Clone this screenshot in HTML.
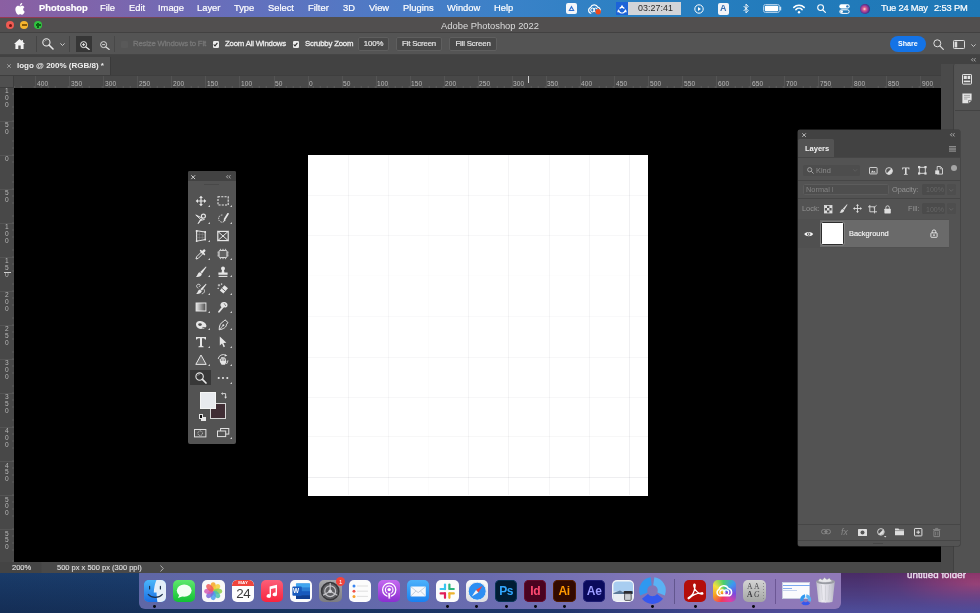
<!DOCTYPE html>
<html lang="en">
<head>
<meta charset="utf-8">
<title>Adobe Photoshop 2022</title>
<style>
*{box-sizing:border-box;margin:0;padding:0}
html,body{width:980px;height:613px;overflow:hidden;background:#1b3a6b}
body{font-family:"Liberation Sans",sans-serif;color:#ddd;position:relative;-webkit-font-smoothing:antialiased}
.abs{position:absolute}
.t{position:absolute;white-space:nowrap;line-height:1;will-change:transform}
svg{position:absolute;overflow:visible}

/* desktop */
#desk{left:0;top:560px;width:980px;height:53px;background:linear-gradient(180deg,rgba(40,90,150,.28) 0%,rgba(30,70,130,.12) 45%,rgba(10,20,50,.22) 100%),linear-gradient(90deg,#17355f 0%,#193a68 30%,#233e78 55%,#3a3f88 75%,#4a3f88 86%,#5a4088 100%)}
#desk2{left:700px;top:560px;width:280px;height:53px;background:radial-gradient(ellipse 120px 40px at 99% 46%,rgba(176,62,108,.95) 0%,rgba(150,54,108,.75) 35%,rgba(110,50,110,.4) 68%,rgba(80,50,110,0) 100%),linear-gradient(90deg,rgba(74,44,102,0) 0%,rgba(74,44,102,1) 55%),linear-gradient(180deg,rgba(74,44,102,1) 0%,rgba(74,44,102,1) 100%)}

/* menubar */
#menubar{left:0;top:0;width:980px;height:17px;background:linear-gradient(90deg,#8b5fa2 0%,#7b66ae 12%,#6470bd 25%,#4c7bc6 40%,#3a82c8 52%,#2b80c2 65%,#227bbb 80%,#1f78b6 100%)}
#menubar .t{top:3.9px;font-size:9.35px;color:#fff;-webkit-text-stroke:.2px #fff}
#menubar .b{font-weight:bold}

/* window */
#titlebar{left:0;top:17px;width:980px;height:16px;background:#514f4f;border-bottom:1px solid #424141}
#optbar{left:0;top:33px;width:980px;height:22px;background:#545454;border-bottom:1px solid #454545}
#tabbar{left:0;top:55px;width:941px;height:20px;background:#424242}
#tab{left:0;top:57px;width:111px;height:18px;background:#535353;border-right:1px solid #3a3a3a}
#hruler{left:0;top:75px;width:941px;height:13.4px;background:#484848;border-top:1px solid #3e3e3e}
#vruler{left:0;top:88px;width:14px;height:474px;background:#484848}
#work{left:14px;top:88.4px;width:927px;height:473.6px;background:#000}
#status{left:0;top:562px;width:941px;height:11px;background:linear-gradient(90deg,#444 0,#444 41px,#494949 42px,#494949 100%)}
#rightgap{left:941px;top:55px;width:39px;height:518px;background:linear-gradient(180deg,#424242 0,#424242 9px,#4a4a4a 9.5px,#4a4a4a 100%)}
#rightcol{left:953.4px;top:64px;width:26.6px;height:509px;background:#525252;border-left:1px solid #404040;border-radius:2px 0 0 0}
#canvas{left:307.6px;top:155.2px;width:340.2px;height:340.5px;background:#fff}

.ot{top:40.4px;font-size:7.8px;letter-spacing:-.2px;color:#ececec;-webkit-text-stroke:.3px currentColor}
.cb{top:40.8px;width:6.8px;height:6.8px;border-radius:1.3px;background:#ececec}
.btn{will-change:transform;top:37px;height:14px;background:#494949;border:1px solid #5f5f5f;border-radius:2px;font-size:7.8px;letter-spacing:-.15px;line-height:12.6px;text-align:center;color:#e4e4e4;-webkit-text-stroke:.2px currentColor}

.htk{top:76px;width:1px;height:12px;background:#545454}
.vtk{left:0;width:14px;height:1px;background:#545454}
.rl{font-size:6.6px;color:#b8b8b8;letter-spacing:.1px}
.vd{left:3px;width:8px;text-align:center}
.st{top:564.2px;font-size:7.5px;color:#dedede;-webkit-text-stroke:.15px currentColor}

.di{top:579.6px;width:22.4px;height:22.4px;border-radius:5px;overflow:hidden}
#desk3{left:560px;top:573px;width:420px;height:40px;background:linear-gradient(180deg,rgba(80,84,162,0) 0%,rgba(80,84,162,.45) 55%,rgba(78,84,165,.85) 100%);-webkit-mask-image:linear-gradient(90deg,transparent 0,#000 55%);mask-image:linear-gradient(90deg,transparent 0,#000 55%)}
</style>
</head>
<body>
<div class="abs" id="desk"></div>
<div class="abs" id="desk2"></div>
<div class="abs" id="desk3"></div>
<span class="t" style="left:907px;top:569.6px;font-size:9.7px;color:#eadfee;letter-spacing:.05px;-webkit-text-stroke:.35px #eadfee">untitled folder</span>
<!-- dock -->
<div class="abs" style="left:138.8px;top:566px;width:702.7px;height:43.4px;border-radius:6px;background:linear-gradient(90deg,#5f67a6 0%,#6269aa 30%,#6a6cb0 50%,#7c74b6 68%,#8c79b8 82%,#9079b8 100%)"></div>
<div class="abs di" style="left:143.8px;background:#2f9af2"><svg style="left:0;top:0" width="22.4" height="22.4" viewBox="0 0 22.4 22.4"><defs><linearGradient id="fg" x1="0" y1="0" x2="0" y2="1"><stop offset="0" stop-color="#4ab6fa"/><stop offset="1" stop-color="#1a6fe4"/></linearGradient></defs><path d="M0 0 H12.4 C10.8 4 10 8 9.8 12.4 H12.6 C12.6 16 13 19.6 13.6 22.4 H0 Z" fill="url(#fg)"/><path d="M12.4 0 H22.4 V22.4 H13.6 C13 19.6 12.6 16 12.6 12.4 H9.8 C10 8 10.8 4 12.400000000000002 0 Z" fill="#e4eef8"/><path d="M5.6 6.4 V9 M16.4 6.4 V9" stroke="#1c2f4a" stroke-width="1.2" stroke-linecap="round"/><path d="M4.2 14.4 C8 18.4 14.6 18.4 18.4 14.4" fill="none" stroke="#1c2f4a" stroke-width="1.1" stroke-linecap="round"/></svg></div>
<div class="abs di" style="left:173.1px;background:linear-gradient(180deg,#5ee86c,#12c135)"><svg style="left:0;top:0" width="22.4" height="22.4" viewBox="0 0 22.4 22.4"><ellipse cx="11.2" cy="10.6" rx="7.4" ry="6.2" fill="#f4fff4"/><path d="M6.4 14.4 L5 18 L9.6 16.2 Z" fill="#f4fff4"/></svg></div>
<div class="abs di" style="left:202.3px;background:#f8f8f8"><svg style="left:0;top:0" width="22.4" height="22.4" viewBox="0 0 22.4 22.4"><ellipse cx="11.20" cy="6.60" rx="4.4" ry="2.7" fill="#f6a623" fill-opacity=".85" transform="rotate(-90 11.20 6.60)"/><ellipse cx="14.45" cy="7.95" rx="4.4" ry="2.7" fill="#f4d03a" fill-opacity=".85" transform="rotate(-45 14.45 7.95)"/><ellipse cx="15.80" cy="11.20" rx="4.4" ry="2.7" fill="#8ed04a" fill-opacity=".85" transform="rotate(0 15.80 11.20)"/><ellipse cx="14.45" cy="14.45" rx="4.4" ry="2.7" fill="#4cc3a8" fill-opacity=".85" transform="rotate(45 14.45 14.45)"/><ellipse cx="11.20" cy="15.80" rx="4.4" ry="2.7" fill="#4a9df0" fill-opacity=".85" transform="rotate(90 11.20 15.80)"/><ellipse cx="7.95" cy="14.45" rx="4.4" ry="2.7" fill="#7d6ad8" fill-opacity=".85" transform="rotate(135 7.95 14.45)"/><ellipse cx="6.60" cy="11.20" rx="4.4" ry="2.7" fill="#d25ab4" fill-opacity=".85" transform="rotate(180 6.60 11.20)"/><ellipse cx="7.95" cy="7.95" rx="4.4" ry="2.7" fill="#f0595a" fill-opacity=".85" transform="rotate(225 7.95 7.95)"/></svg></div>
<div class="abs di" style="left:231.6px;background:#fdfdfd"><div class="abs" style="left:0;top:0;width:22.4px;height:6.4px;background:#f0443c;border-radius:5px 5px 0 0"></div><span class="t" style="left:0;width:22.4px;text-align:center;top:1.2px;font-size:4.4px;font-weight:bold;color:#fff;letter-spacing:.1px">MAY</span><span class="t" style="left:0;width:22.4px;text-align:center;top:7px;font-size:13.4px;color:#3a3a3a;letter-spacing:-.4px">24</span></div>
<div class="abs di" style="left:260.8px;background:linear-gradient(180deg,#fc5f78,#f8243e)"><svg style="left:0;top:0" width="22.4" height="22.4" viewBox="0 0 22.4 22.4"><path d="M8.6 6.4 L16 4.8 V14.4 A2.2 1.9 0 1 1 14.6 12.6 V8 L10 9 V16 A2.2 1.9 0 1 1 8.6 14.2 Z" fill="#fff"/></svg></div>
<div class="abs di" style="left:290.1px;background:#fbfbfb"><svg style="left:0;top:0" width="22.4" height="22.4" viewBox="0 0 22.4 22.4"><rect x="6" y="3.4" width="14" height="15.6" rx="1.2" fill="#2b7cd3"/><rect x="6" y="3.400000000000001" width="14" height="4" fill="#41a5ee"/><rect x="6" y="11.2" width="14" height="4" fill="#185abd"/><rect x="6" y="15.2" width="14" height="3.8" fill="#103f91"/><rect x="2.400000000000001" y="6.4" width="9.4" height="9.4" rx="1" fill="#185abd"/></svg><span class="t" style="left:3.2px;top:8px;font-size:6.4px;font-weight:bold;color:#fff">W</span></div>
<div class="abs di" style="left:319.3px;background:linear-gradient(180deg,#a8a8ac,#7c7c80)"><svg style="left:0;top:0" width="22.4" height="22.4" viewBox="0 0 22.4 22.4"><circle cx="11.2" cy="11.2" r="8.6" fill="#5e5e62" stroke="#38383c" stroke-width="1.6"/><circle cx="11.2" cy="11.2" r="5.4" fill="none" stroke="#c4c4c8" stroke-width="1.2"/><path d="M11.2 11.2 L11.2 3 M11.2 11.2 L18.4 15.3 M11.2 11.2 L4 15.3" stroke="#c4c4c8" stroke-width="1.2"/><circle cx="11.2" cy="11.2" r="1.8" fill="#d8d8dc"/></svg></div>
<div class="abs" style="left:335.9px;top:577.3px;width:9px;height:9px;border-radius:50%;background:#f2453d"></div><span class="t" style="left:338.8px;top:578.8px;font-size:6px;color:#fff">1</span>
<div class="abs di" style="left:348.6px;background:#fcfcfc"><svg style="left:0;top:0" width="22.4" height="22.4" viewBox="0 0 22.4 22.4"><circle cx="5" cy="6" r="1.5" fill="#3a86f0"/><circle cx="5" cy="11.2" r="1.5" fill="#f0524a"/><circle cx="5" cy="16.4" r="1.5" fill="#f6a12c"/><path d="M8 6 H19 M8 11.2 H19 M8 16.4 H19" stroke="#d8d8d8" stroke-width=".8"/></svg></div>
<div class="abs di" style="left:377.8px;background:linear-gradient(180deg,#c56af0,#8a2fd0)"><svg style="left:0;top:0" width="22.4" height="22.4" viewBox="0 0 22.4 22.4"><circle cx="11.2" cy="9.8" r="6.6" fill="none" stroke="#fff" stroke-width="1.3"/><circle cx="11.2" cy="9.8" r="3.8" fill="none" stroke="#fff" stroke-width="1.2"/><circle cx="11.2" cy="9.6" r="1.7" fill="#fff"/><path d="M9.6 12.6 H12.8 L12.2 19 H10.2 Z" fill="#fff" stroke="#a43cd8" stroke-width=".8"/></svg></div>
<div class="abs di" style="left:407.1px;background:linear-gradient(180deg,#4db2fb,#1a80f0)"><svg style="left:0;top:0" width="22.4" height="22.4" viewBox="0 0 22.4 22.4"><rect x="3.6" y="6.4" width="15.2" height="10" rx="1.2" fill="#f6f8fc"/><path d="M3.8 6.8 L11.2 12.6 L18.6 6.8 M3.8 16 L9 11 M18.6 16 L13.4 11" fill="none" stroke="#b8c4d4" stroke-width=".8"/></svg></div>
<div class="abs di" style="left:436.3px;background:#fcfcfc"><svg style="left:0;top:0" width="22.4" height="22.4" viewBox="0 0 22.4 22.4"><g stroke-width="2.2" stroke-linecap="round" fill="none"><path d="M9 4.600000000000001 V9.2" stroke="#36c5f0"/><path d="M4.6 9 H9" stroke="#36c5f0"/><path d="M17.8 9 H13.6" stroke="#2eb67d"/><path d="M13.4 4.6 V9" stroke="#2eb67d"/><path d="M13.4 17.8 V13.4" stroke="#ecb22e"/><path d="M17.8 13.4 H13.4" stroke="#ecb22e"/><path d="M4.600000000000001 13.4 H9" stroke="#e01e5a"/><path d="M9 17.8 V13.4" stroke="#e01e5a"/></g></svg></div>
<div class="abs di" style="left:465.6px;background:linear-gradient(180deg,#fbfbfb,#dcdce0)"><svg style="left:0;top:0" width="22.4" height="22.4" viewBox="0 0 22.4 22.4"><circle cx="11.2" cy="11.2" r="9" fill="#2d8ef2"/><circle cx="11.2" cy="11.2" r="9" fill="none" stroke="#e6eaf0" stroke-width="1"/><path d="M16.6 5.8 L12.4 12.4 L10 10 Z" fill="#f2423c"/><path d="M5.800000000000001 16.6 L12.4 12.4 L10 10 Z" fill="#f4f4f4"/></svg></div>
<div class="abs di" style="left:494.8px;background:#001d34;box-shadow:inset 0 0 0 .8px #0a3a60"><span class="t" style="left:0;width:22.4px;text-align:center;top:5.4px;font-size:12px;font-weight:bold;color:#31a8ff;letter-spacing:-.3px">Ps</span></div>
<div class="abs di" style="left:524.0px;background:#4a0320;box-shadow:inset 0 0 0 .8px #6a1030"><span class="t" style="left:0;width:22.4px;text-align:center;top:5.4px;font-size:12px;font-weight:bold;color:#ff4a72;letter-spacing:-.3px">Id</span></div>
<div class="abs di" style="left:553.3px;background:#320a00;box-shadow:inset 0 0 0 .8px #5a2000"><span class="t" style="left:0;width:22.4px;text-align:center;top:5.4px;font-size:12px;font-weight:bold;color:#ff9a00;letter-spacing:-.3px">Ai</span></div>
<div class="abs di" style="left:582.5px;background:#0a0a5c;box-shadow:inset 0 0 0 .8px #22227a"><span class="t" style="left:0;width:22.4px;text-align:center;top:5.4px;font-size:12px;font-weight:bold;color:#9b9bff;letter-spacing:-.3px">Ae</span></div>
<div class="abs di" style="left:611.8px;background:#f4f6f8"><svg style="left:0;top:0" width="22.4" height="22.4" viewBox="0 0 22.4 22.4"><rect x="1.4" y="1.4" width="19.6" height="19.6" rx="3.6" fill="#a8cdf0"/><rect x="1.4" y="11.6" width="19.6" height="9.4" fill="#e8eef4"/><path d="M1.4 13 L8 10.6 L14 13.4 L21 11 V14 H1.4 Z" fill="#5a7a9a"/><rect x="11.6" y="11" width="8.6" height="3" rx="1" fill="#2a2a2e"/><rect x="12.6" y="13.6" width="6.6" height="6.8" rx="1" fill="#c8ccd0" stroke="#3a3a3e" stroke-width=".8"/></svg></div>
<svg style="left:639px;top:577.4px" width="27" height="27" viewBox="0 0 27 27"><path d="M14.79 4.29 A9.3 9.3 0 0 1 22.12 16.98" fill="none" stroke="#5ab2f4" stroke-width="8"/><path d="M4.88 16.98 A9.3 9.3 0 0 1 12.21 4.29" fill="none" stroke="#2f98f0" stroke-width="8"/><path d="M21.06 19.41 A9.6 9.6 0 0 1 5.94 19.41" fill="none" stroke="#3558ee" stroke-width="7.6"/></svg>
<div class="abs" style="left:674px;top:578.5px;width:1px;height:25.5px;background:rgba(70,60,110,.55)"></div>
<div class="abs di" style="left:684.0px;background:#b40e0a"><svg style="left:0;top:0" width="22.4" height="22.4" viewBox="0 0 22.4 22.4"><path d="M4.6 17.6 C8 16.4 10.600000000000001 11.4 11.200000000000001 5.4 C11.4 3.6 9.4 3.8 9.8 5.800000000000001 C10.6 10 14 13.6 17.6 14.200000000000001 C19.4 14.4 19.2 12.6 17.4 12.8 C12.8 13.2 8 15 5.6 18.2 C4.6 19.4 3.4 18.2 4.6 17.6 Z" fill="none" stroke="#fff" stroke-width="1.3" stroke-linejoin="round"/></svg></div>
<div class="abs di" style="left:713.2px;background:conic-gradient(from 200deg at 50% 55%,#f23a5a,#f8a020,#f4e040,#4ad06a,#3a9af0,#7a4ae0,#e040a0,#f23a5a)"><svg style="left:0;top:0" width="22.4" height="22.4" viewBox="0 0 22.4 22.4"><path d="M6.8 15.8 A3.4 3.4 0 0 1 6 9.4 A5 5 0 0 1 15.4 8.6 A3.8 3.8 0 0 1 16.4 15.8 Z" fill="none" stroke="#fff" stroke-width="1.5"/><circle cx="9.4" cy="12.4" r="2.5" fill="none" stroke="#fff" stroke-width="1.2"/><circle cx="13.2" cy="12.4" r="2.5" fill="none" stroke="#fff" stroke-width="1.2"/></svg></div>
<div class="abs di" style="left:743.2px;background:linear-gradient(180deg,#d4d4d4,#a4a6a4)"><span class="t" style="left:3.6px;top:3.6px;font-size:7.6px;color:#4a4a4e;font-family:'Liberation Serif',serif;letter-spacing:1.4px">AA</span><span class="t" style="left:3.6px;top:11.4px;font-size:7.6px;color:#3a3a3e;font-family:'Liberation Serif',serif;letter-spacing:1.4px"><b>A</b><i>G</i></span><div class="abs" style="left:19.6px;top:3px;width:1.2px;height:16.4px;background:repeating-linear-gradient(180deg,#8a8a8e 0 1.4px,transparent 1.4px 3px)"></div></div>
<div class="abs" style="left:774.6px;top:578.5px;width:1px;height:25.5px;background:rgba(80,60,120,.55)"></div>
<div class="abs" style="left:782px;top:582px;width:28px;height:17.4px;background:#fafbfd;border:.5px solid #c8cce0"></div>
<div class="abs" style="left:782.5px;top:584.6px;width:27px;height:1.6px;background:#7aa8f0"></div>
<div class="abs" style="left:783.2px;top:587.6px;width:9px;height:1.2px;background:#8ab0ee"></div>
<div class="abs" style="left:783.2px;top:590.2px;width:14px;height:.8px;background:#c4d2ee"></div>
<svg style="left:799.6px;top:593.6px" width="11.4" height="11.4" viewBox="0 0 27 27"><path d="M14.79 4.29 A9.3 9.3 0 0 1 22.12 16.98" fill="none" stroke="#5ab2f4" stroke-width="8"/><path d="M4.88 16.98 A9.3 9.3 0 0 1 12.21 4.29" fill="none" stroke="#2f98f0" stroke-width="8"/><path d="M21.06 19.41 A9.6 9.6 0 0 1 5.94 19.41" fill="none" stroke="#3558ee" stroke-width="7.6"/></svg>
<svg style="left:814.5px;top:577px" width="21" height="26.4" viewBox="0 0 21 26.4"><defs><linearGradient id="tg" x1="0" x2="1"><stop offset="0" stop-color="#c4c6cc"/><stop offset=".35" stop-color="#f4f4f6"/><stop offset=".7" stop-color="#dcdde2"/><stop offset="1" stop-color="#b8bac2"/></linearGradient></defs><path d="M1.2 4.6 H19.8 L17.6 24.6 C17.4 26 3.6 26 3.4 24.6 Z" fill="url(#tg)" fill-opacity=".92"/><ellipse cx="10.5" cy="4.6" rx="9.4" ry="2.6" fill="#9a9ca4"/><path d="M3 4 L5 1.4 L7.4 3 L9.4 .6 L12 2.6 L14.4 1 L16 3.2 L18 3.8 C16 6 5 6 3 4 Z" fill="#e8e8ec" stroke="#8a8c94" stroke-width=".4"/><path d="M6.4 8 L7.4 23 M10.5 8.4 V23.4 M14.6 8 L13.6 23" stroke="#c0c2c8" stroke-width=".5"/></svg>
<div class="abs" style="left:153.1px;top:605.3px;width:2.9px;height:2.9px;border-radius:50%;background:#08080e"></div>
<div class="abs" style="left:446.1px;top:605.3px;width:2.9px;height:2.9px;border-radius:50%;background:#08080e"></div>
<div class="abs" style="left:475.3px;top:605.3px;width:2.9px;height:2.9px;border-radius:50%;background:#08080e"></div>
<div class="abs" style="left:504.7px;top:605.3px;width:2.9px;height:2.9px;border-radius:50%;background:#08080e"></div>
<div class="abs" style="left:533.9px;top:605.3px;width:2.9px;height:2.9px;border-radius:50%;background:#08080e"></div>
<div class="abs" style="left:563.1px;top:605.3px;width:2.9px;height:2.9px;border-radius:50%;background:#08080e"></div>
<div class="abs" style="left:651.1px;top:605.3px;width:2.9px;height:2.9px;border-radius:50%;background:#08080e"></div>
<div class="abs" style="left:693.9px;top:605.3px;width:2.9px;height:2.9px;border-radius:50%;background:#08080e"></div>
<div class="abs" style="left:751.7px;top:605.3px;width:2.9px;height:2.9px;border-radius:50%;background:#08080e"></div>
<!--DOCK_END-->

<!-- ===== macOS menu bar ===== -->
<div class="abs" id="menubar">
  <span class="t b" style="left:39px">Photoshop</span>
  <span class="t" style="left:100px">File</span>
  <span class="t" style="left:129px">Edit</span>
  <span class="t" style="left:158px">Image</span>
  <span class="t" style="left:197px">Layer</span>
  <span class="t" style="left:234px">Type</span>
  <span class="t" style="left:268px">Select</span>
  <span class="t" style="left:308px">Filter</span>
  <span class="t" style="left:343px">3D</span>
  <span class="t" style="left:369px">View</span>
  <span class="t" style="left:403px">Plugins</span>
  <span class="t" style="left:447px">Window</span>
  <span class="t" style="left:494px">Help</span>
  <span class="t" style="left:880.5px;letter-spacing:-.22px">Tue 24 May</span>
  <span class="t" style="left:933.5px;letter-spacing:-.15px">2:53 PM</span>
</div>

<!-- ===== Photoshop window chrome ===== -->
<div class="abs" id="titlebar"></div>
<div class="abs" id="optbar"></div>
<div class="abs" id="tabbar"></div>
<div class="abs" id="tab"></div>
<div class="abs" id="hruler"></div>
<div class="abs" id="vruler"></div>
<div class="abs" id="work"></div>
<div class="abs" id="status"></div>
<div class="abs" id="rightgap"></div>
<div class="abs" id="rightcol"></div>
<div class="abs" id="canvas"></div>

<!-- menubar icons -->
<svg style="left:14.5px;top:2.5px" width="10" height="12" viewBox="0 0 10 12"><path d="M6.9 1.9 C7.4 1.3 7.7 .6 7.6 0 C6.9 0 6.1 .5 5.7 1 C5.3 1.5 4.9 2.2 5 2.9 C5.8 2.9 6.5 2.5 6.9 1.9 Z M7.7 3 C6.7 2.9 5.9 3.6 5.4 3.6 C4.9 3.6 4.2 3 3.4 3 C2.4 3 1.4 3.6 .9 4.6 C-.2 6.5 .6 9.3 1.6 10.800000000000001 C2.1 11.5 2.7 12.3 3.5 12.3 C4.3 12.3 4.6 11.8 5.5 11.8 C6.4 11.8 6.7 12.3 7.5 12.3 C8.3 12.3 8.9 11.5 9.4 10.8 C9.9 10 10.2 9.2 10.2 9.1 C10.2 9.1 8.6 8.5 8.6 6.7 C8.6 5.2 9.8 4.5 9.9 4.4 C9.200000000000001 3.4 8.1 3 7.7 3 Z" fill="#fff" transform="scale(.95)"/></svg>
<!-- app icon 1 -->
<div class="abs" style="left:566px;top:3px;width:11px;height:11px;border-radius:2px;background:#f4f6fa"></div>
<svg style="left:568px;top:5px" width="7" height="7" viewBox="0 0 7 7"><path d="M3.5 .6 L6.6 6 L.4 6 Z" fill="#2f6fd0"/><path d="M3.5 3 L4.8 5.1 L2.2 5.1 Z" fill="#f4f6fa"/></svg>
<!-- creative cloud w/ red dot -->
<svg style="left:587.5px;top:3.5px" width="14" height="11" viewBox="0 0 14 11"><path d="M3.3 9.3 A3 3 0 0 1 2.6 3.5 A3.9 3.9 0 0 1 9.8 3.2 A3.1 3.1 0 0 1 11.2 8.6" fill="none" stroke="#fff" stroke-width="1.2"/><circle cx="4.6" cy="6" r="1.9" fill="none" stroke="#fff" stroke-width="1"/><circle cx="7.6" cy="6" r="1.9" fill="none" stroke="#fff" stroke-width="1"/><circle cx="10.2" cy="7.8" r="2.7" fill="#ee4b1e"/></svg>
<!-- timer -->
<div class="abs" style="left:615.5px;top:2px;width:12.5px;height:13px;background:#1c63d8"></div>
<svg style="left:617px;top:3.5px" width="10" height="10" viewBox="0 0 10 10"><path d="M5 .7 L6.9 3.9 L3.1 3.9 Z M1.2 5 L3 8.3 L.2 8.3 Z M8.8 5 L9.8 8.3 L7 8.3 Z" fill="#fff"/><path d="M2.6 4.5 A3.4 3.4 0 0 1 7.4 4.5 M8 6.6 A3.4 3.4 0 0 1 5.2 9.2 M4.8 9.2 A3.4 3.4 0 0 1 2 6.6" fill="none" stroke="#fff" stroke-width="1.2"/></svg>
<div class="abs" style="left:628px;top:2px;width:53px;height:13px;background:#d2d4d8"></div>
<span class="t" style="left:638px;top:4.2px;font-size:8.9px;color:#2a2a2a;letter-spacing:.05px;-webkit-text-stroke:0">03:27:41</span>
<!-- play -->
<svg style="left:694px;top:3.5px" width="10" height="10" viewBox="0 0 10 10"><circle cx="5" cy="5" r="4.2" fill="none" stroke="#fff" stroke-width="1"/><path d="M4 3 L7 5 L4 7 Z" fill="#fff"/></svg>
<!-- A input -->
<div class="abs" style="left:717.5px;top:3px;width:11.5px;height:11.5px;border-radius:2px;background:#f2f4f8"></div>
<span class="t" style="left:720px;top:4px;font-size:9px;color:#3a6fb0;font-weight:bold;-webkit-text-stroke:0">A</span>
<!-- bluetooth -->
<svg style="left:743px;top:3px" width="6" height="11" viewBox="0 0 6 11"><path d="M.6 3 L5.2 7.6 L3 9.9 L3 1.1 L5.2 3.4 L.6 8" fill="none" stroke="#fff" stroke-width=".9" stroke-linejoin="round"/></svg>
<!-- battery -->
<svg style="left:762.5px;top:4px" width="19" height="9" viewBox="0 0 19 9"><rect x=".5" y=".5" width="16" height="8" rx="2" fill="none" stroke="#a9cdea" stroke-width="1"/><rect x="1.8" y="1.8" width="13.4" height="5.4" rx="1" fill="#fff"/><path d="M17.6 3 V6" stroke="#cfe3f3" stroke-width="1.2" stroke-linecap="round"/></svg>
<!-- wifi -->
<svg style="left:792.5px;top:3.5px" width="12" height="10" viewBox="0 0 12 10"><path d="M.8 3.4 A7.4 7.4 0 0 1 11.2 3.4" fill="none" stroke="#fff" stroke-width="1.5" stroke-linecap="round"/><path d="M2.9 5.6 A4.4 4.4 0 0 1 9.1 5.6" fill="none" stroke="#fff" stroke-width="1.5" stroke-linecap="round"/><circle cx="6" cy="8.2" r="1.2" fill="#fff"/></svg>
<!-- search -->
<svg style="left:817px;top:4px" width="9" height="9" viewBox="0 0 9 9"><circle cx="3.6" cy="3.6" r="2.9" fill="none" stroke="#fff" stroke-width="1.1"/><path d="M5.8 5.8 L8.4 8.4" stroke="#fff" stroke-width="1.2" stroke-linecap="round"/></svg>
<!-- control center -->
<svg style="left:838.5px;top:3.5px" width="11" height="10" viewBox="0 0 11 10"><rect x=".3" y=".3" width="10.4" height="4.2" rx="2.1" fill="#fff"/><circle cx="8.4" cy="2.4" r="1.2" fill="#2a78bb"/><rect x=".8" y="5.8" width="9.4" height="3.6" rx="1.8" fill="none" stroke="#fff" stroke-width="1"/><circle cx="2.7" cy="7.6" r="1.3" fill="#fff"/></svg>
<!-- siri -->
<div class="abs" style="left:859.5px;top:3.5px;width:10.5px;height:10.5px;border-radius:50%;background:radial-gradient(circle at 45% 50%,#f8e4ec 0%,#e0608a 22%,#8a3a9a 48%,#3a2f7a 72%,#27306e 100%)"></div>

<!-- title bar -->
<div class="abs" style="left:0;top:17px;width:200px;height:1px;background:linear-gradient(90deg,rgba(170,50,80,.8) 0%,rgba(150,60,90,.6) 70%,rgba(120,70,100,0) 100%)"></div>
<div class="abs" style="left:6px;top:21px;width:8px;height:8px;border-radius:50%;background:#ee5a52"></div>
<div class="abs" style="left:8.5px;top:23.5px;width:3px;height:3px;border-radius:50%;background:#6e1410"></div>
<div class="abs" style="left:20px;top:21px;width:8px;height:8px;border-radius:50%;background:#f6b52e"></div>
<div class="abs" style="left:21.5px;top:24.3px;width:5px;height:1.4px;background:#8a5a06"></div>
<div class="abs" style="left:34px;top:21px;width:8px;height:8px;border-radius:50%;background:#30c33f"></div>
<div class="abs" style="left:35.5px;top:24.3px;width:5px;height:1.4px;background:#0b6314"></div>
<div class="abs" style="left:37.3px;top:22.5px;width:1.4px;height:5px;background:#0b6314"></div>
<span class="t" style="left:441px;top:20.9px;font-size:9.4px;color:#dcdcdc">Adobe Photoshop 2022</span>

<!-- options bar -->
<svg style="left:14px;top:39px" width="11" height="10" viewBox="0 0 11 10"><path d="M5.5 0 L0 5 L1.4 5 L1.4 10 L4.3 10 L4.3 6.6 L6.7 6.6 L6.7 10 L9.6 10 L9.6 5 L11 5 L8.9 3.1 L8.9 0.9 L7.6 0.9 L7.6 1.9 Z" fill="#f2f2f2"/></svg>
<div class="abs" style="left:36px;top:36px;width:1px;height:16px;background:#454545"></div>
<svg style="left:42px;top:38px" width="12" height="12" viewBox="0 0 12 12"><circle cx="4.4" cy="4.4" r="3.6" fill="none" stroke="#e8e8e8" stroke-width="1.1"/><path d="M7 7 L11 11" stroke="#e8e8e8" stroke-width="1.6" stroke-linecap="round"/><path d="M2.4 3.6 A2.3 2.3 0 0 1 4.6 2.2" fill="none" stroke="#bdbdbd" stroke-width=".6"/></svg>
<svg style="left:59.5px;top:43px" width="5" height="3" viewBox="0 0 5 3"><path d="M.4 .4 L2.5 2.5 L4.6 .4" fill="none" stroke="#d8d8d8" stroke-width=".9"/></svg>
<div class="abs" style="left:69px;top:36px;width:1px;height:16px;background:#454545"></div>
<div class="abs" style="left:76px;top:36px;width:16px;height:16px;background:#363636"></div>
<svg style="left:79.5px;top:40.5px" width="10" height="9" viewBox="0 0 10 9"><circle cx="3.6" cy="3.6" r="3" fill="none" stroke="#ececec" stroke-width="1"/><path d="M5.9 5.9 L9.2 8.4" stroke="#ececec" stroke-width="1.3" stroke-linecap="round"/><path d="M2.1 3.6 H5.1 M3.6 2.1 V5.1" stroke="#ececec" stroke-width=".9"/></svg>
<svg style="left:99.5px;top:40.5px" width="10" height="9" viewBox="0 0 10 9"><circle cx="3.6" cy="3.6" r="3" fill="none" stroke="#dcdcdc" stroke-width="1"/><path d="M5.9 5.9 L9.2 8.4" stroke="#dcdcdc" stroke-width="1.3" stroke-linecap="round"/><path d="M2.1 3.6 H5.1" stroke="#dcdcdc" stroke-width=".9"/></svg>
<div class="abs" style="left:114px;top:36px;width:1px;height:16px;background:#484848"></div>
<div class="abs" style="left:121px;top:41px;width:6.5px;height:6.5px;border-radius:1.2px;background:#595959"></div>
<span class="t ot" style="left:133px;color:#787878">Resize Windows to Fit</span>
<div class="abs cb" style="left:212.5px"></div>
<svg style="left:213.3px;top:42px" width="5" height="5" viewBox="0 0 5 5"><path d="M.7 2.5 L2 3.9 L4.4 .9" fill="none" stroke="#2a2a2a" stroke-width="1.1"/></svg>
<span class="t ot" style="left:225px">Zoom All Windows</span>
<div class="abs cb" style="left:292.5px"></div>
<svg style="left:293.3px;top:42px" width="5" height="5" viewBox="0 0 5 5"><path d="M.7 2.5 L2 3.9 L4.4 .9" fill="none" stroke="#2a2a2a" stroke-width="1.1"/></svg>
<span class="t ot" style="left:305px">Scrubby Zoom</span>
<div class="abs btn" style="left:358px;width:31px">100%</div>
<div class="abs btn" style="left:396px;width:46px">Fit Screen</div>
<div class="abs btn" style="left:449px;width:48px">Fill Screen</div>
<div class="abs" style="left:889.5px;top:36.3px;width:36.7px;height:15.6px;border-radius:8px;background:#1473e6"></div>
<span class="t" style="left:898.2px;top:41.1px;font-size:7.1px;font-weight:bold;color:#fff">Share</span>
<svg style="left:933px;top:39px" width="11" height="11" viewBox="0 0 11 11"><circle cx="4.3" cy="4.3" r="3.5" fill="none" stroke="#e0e0e0" stroke-width="1"/><path d="M6.9 6.9 L10.3 10.3" stroke="#e0e0e0" stroke-width="1.2" stroke-linecap="round"/></svg>
<svg style="left:953px;top:40px" width="12" height="9" viewBox="0 0 12 9"><rect x=".5" y=".5" width="11" height="8" rx=".8" fill="none" stroke="#dcdcdc" stroke-width="1"/><rect x="1.6" y="1.6" width="2.6" height="5.8" fill="#dcdcdc"/></svg>
<svg style="left:971.2px;top:43.5px" width="5" height="3" viewBox="0 0 5 3"><path d="M.4 .4 L2.5 2.5 L4.6 .4" fill="none" stroke="#cfcfcf" stroke-width=".9"/></svg>

<!-- canvas grid -->
<div class="abs" style="left:347.5px;top:155px;width:1px;height:340px;background:rgba(60,60,80,0.05)"></div>
<div class="abs" style="left:387.5px;top:155px;width:1px;height:340px;background:rgba(60,60,80,0.04)"></div>
<div class="abs" style="left:427.5px;top:155px;width:1px;height:340px;background:rgba(60,60,80,0.015)"></div>
<div class="abs" style="left:467.5px;top:155px;width:1px;height:340px;background:rgba(60,60,80,0.05)"></div>
<div class="abs" style="left:508.0px;top:155px;width:1px;height:340px;background:rgba(60,60,80,0.055)"></div>
<div class="abs" style="left:548.5px;top:155px;width:1px;height:340px;background:rgba(60,60,80,0.05)"></div>
<div class="abs" style="left:588.5px;top:155px;width:1px;height:340px;background:rgba(60,60,80,0.05)"></div>
<div class="abs" style="left:629.0px;top:155px;width:1px;height:340px;background:rgba(60,60,80,0.075)"></div>
<div class="abs" style="left:308px;top:194.5px;width:340px;height:1px;background:rgba(60,60,80,0.04)"></div>
<div class="abs" style="left:308px;top:234.5px;width:340px;height:1px;background:rgba(60,60,80,0.04)"></div>
<div class="abs" style="left:308px;top:275.0px;width:340px;height:1px;background:rgba(60,60,80,0.012)"></div>
<div class="abs" style="left:308px;top:315.5px;width:340px;height:1px;background:rgba(60,60,80,0.03)"></div>
<div class="abs" style="left:308px;top:356.5px;width:340px;height:1px;background:rgba(60,60,80,0.04)"></div>
<div class="abs" style="left:308px;top:396.5px;width:340px;height:1px;background:rgba(60,60,80,0.04)"></div>
<div class="abs" style="left:308px;top:436.0px;width:340px;height:1px;background:rgba(60,60,80,0.045)"></div>
<div class="abs" style="left:308px;top:476.5px;width:340px;height:1px;background:rgba(60,60,80,0.085)"></div>
<!--TITLE_END-->
<!--OPTIONS-->
<!-- tab -->
<svg style="left:6.6px;top:63.6px" width="4" height="4" viewBox="0 0 4 4"><path d="M.2 .2 L3.8 3.8 M3.8 .2 L.2 3.8" stroke="#b8b8b8" stroke-width=".7"/></svg>
<span class="t" style="left:17.2px;top:61.8px;font-size:8px;font-weight:bold;color:#f0f0f0">logo @ 200% (RGB/8) *</span>
<!-- rulers -->
<div class="abs" style="left:0;top:76px;width:14px;height:12.4px;background:#4f4f4f;border-right:1px solid #3e3e3e;border-bottom:1px solid #3e3e3e"></div>
<div class="abs htk" style="left:35.3px"></div>
<span class="t rl" style="left:37.0px;top:80.7px">400</span>
<div class="abs htk" style="left:69.3px"></div>
<span class="t rl" style="left:71.0px;top:80.7px">350</span>
<div class="abs htk" style="left:103.3px"></div>
<span class="t rl" style="left:105.0px;top:80.7px">300</span>
<div class="abs htk" style="left:137.3px"></div>
<span class="t rl" style="left:139.0px;top:80.7px">250</span>
<div class="abs htk" style="left:171.4px"></div>
<span class="t rl" style="left:173.1px;top:80.7px">200</span>
<div class="abs htk" style="left:205.4px"></div>
<span class="t rl" style="left:207.1px;top:80.7px">150</span>
<div class="abs htk" style="left:239.4px"></div>
<span class="t rl" style="left:241.1px;top:80.7px">100</span>
<div class="abs htk" style="left:273.5px"></div>
<span class="t rl" style="left:275.2px;top:80.7px">50</span>
<div class="abs htk" style="left:307.5px"></div>
<span class="t rl" style="left:309.2px;top:80.7px">0</span>
<div class="abs htk" style="left:341.5px"></div>
<span class="t rl" style="left:343.2px;top:80.7px">50</span>
<div class="abs htk" style="left:375.6px"></div>
<span class="t rl" style="left:377.3px;top:80.7px">100</span>
<div class="abs htk" style="left:409.6px"></div>
<span class="t rl" style="left:411.3px;top:80.7px">150</span>
<div class="abs htk" style="left:443.6px"></div>
<span class="t rl" style="left:445.3px;top:80.7px">200</span>
<div class="abs htk" style="left:477.6px"></div>
<span class="t rl" style="left:479.3px;top:80.7px">250</span>
<div class="abs htk" style="left:511.7px"></div>
<span class="t rl" style="left:513.4px;top:80.7px">300</span>
<div class="abs htk" style="left:545.7px"></div>
<span class="t rl" style="left:547.4px;top:80.7px">350</span>
<div class="abs htk" style="left:579.7px"></div>
<span class="t rl" style="left:581.4px;top:80.7px">400</span>
<div class="abs htk" style="left:613.8px"></div>
<span class="t rl" style="left:615.5px;top:80.7px">450</span>
<div class="abs htk" style="left:647.8px"></div>
<span class="t rl" style="left:649.5px;top:80.7px">500</span>
<div class="abs htk" style="left:681.8px"></div>
<span class="t rl" style="left:683.5px;top:80.7px">550</span>
<div class="abs htk" style="left:715.9px"></div>
<span class="t rl" style="left:717.6px;top:80.7px">600</span>
<div class="abs htk" style="left:749.9px"></div>
<span class="t rl" style="left:751.6px;top:80.7px">650</span>
<div class="abs htk" style="left:783.9px"></div>
<span class="t rl" style="left:785.6px;top:80.7px">700</span>
<div class="abs htk" style="left:818.0px"></div>
<span class="t rl" style="left:819.7px;top:80.7px">750</span>
<div class="abs htk" style="left:852.0px"></div>
<span class="t rl" style="left:853.7px;top:80.7px">800</span>
<div class="abs htk" style="left:886.0px"></div>
<span class="t rl" style="left:887.7px;top:80.7px">850</span>
<div class="abs htk" style="left:920.0px"></div>
<span class="t rl" style="left:921.7px;top:80.7px">900</span>
<span class="t rl vd" style="top:88.1px">1</span>
<span class="t rl vd" style="top:95.0px">0</span>
<span class="t rl vd" style="top:101.9px">0</span>
<div class="abs vtk" style="top:120.5px"></div>
<span class="t rl vd" style="top:122.2px">5</span>
<span class="t rl vd" style="top:129.1px">0</span>
<div class="abs vtk" style="top:154.5px"></div>
<span class="t rl vd" style="top:156.2px">0</span>
<div class="abs vtk" style="top:188.5px"></div>
<span class="t rl vd" style="top:190.2px">5</span>
<span class="t rl vd" style="top:197.1px">0</span>
<div class="abs vtk" style="top:222.6px"></div>
<span class="t rl vd" style="top:224.3px">1</span>
<span class="t rl vd" style="top:231.2px">0</span>
<span class="t rl vd" style="top:238.1px">0</span>
<div class="abs vtk" style="top:256.6px"></div>
<span class="t rl vd" style="top:258.3px">1</span>
<span class="t rl vd" style="top:265.2px">5</span>
<span class="t rl vd" style="top:272.1px">0</span>
<div class="abs vtk" style="top:290.6px"></div>
<span class="t rl vd" style="top:292.3px">2</span>
<span class="t rl vd" style="top:299.2px">0</span>
<span class="t rl vd" style="top:306.1px">0</span>
<div class="abs vtk" style="top:324.6px"></div>
<span class="t rl vd" style="top:326.3px">2</span>
<span class="t rl vd" style="top:333.2px">5</span>
<span class="t rl vd" style="top:340.1px">0</span>
<div class="abs vtk" style="top:358.7px"></div>
<span class="t rl vd" style="top:360.4px">3</span>
<span class="t rl vd" style="top:367.3px">0</span>
<span class="t rl vd" style="top:374.2px">0</span>
<div class="abs vtk" style="top:392.7px"></div>
<span class="t rl vd" style="top:394.4px">3</span>
<span class="t rl vd" style="top:401.3px">5</span>
<span class="t rl vd" style="top:408.2px">0</span>
<div class="abs vtk" style="top:426.7px"></div>
<span class="t rl vd" style="top:428.4px">4</span>
<span class="t rl vd" style="top:435.3px">0</span>
<span class="t rl vd" style="top:442.2px">0</span>
<div class="abs vtk" style="top:460.8px"></div>
<span class="t rl vd" style="top:462.5px">4</span>
<span class="t rl vd" style="top:469.4px">5</span>
<span class="t rl vd" style="top:476.3px">0</span>
<div class="abs vtk" style="top:494.8px"></div>
<span class="t rl vd" style="top:496.5px">5</span>
<span class="t rl vd" style="top:503.4px">0</span>
<span class="t rl vd" style="top:510.3px">0</span>
<div class="abs vtk" style="top:528.8px"></div>
<span class="t rl vd" style="top:530.5px">5</span>
<span class="t rl vd" style="top:537.4px">5</span>
<span class="t rl vd" style="top:544.3px">0</span>
<div class="abs" style="left:528px;top:76px;width:1px;height:7px;background:#cfcfcf"></div>
<div class="abs" style="left:4px;top:271.5px;width:7px;height:1px;background:#cfcfcf"></div>
<div class="abs" style="left:14px;top:86.4px;width:927px;height:2px;background:repeating-linear-gradient(90deg,#5c5c5c 0 .8px,transparent .8px 6.806px);background-position:-.3px 0"></div>
<div class="abs" style="left:12px;top:88.4px;width:2px;height:473.6px;background:repeating-linear-gradient(180deg,#5c5c5c 0 .8px,transparent .8px 6.806px);background-position:0 -1.5px"></div>
<!-- status -->
<span class="t st" style="left:12px">200%</span>
<span class="t st" style="left:57px">500 px x 500 px (300 ppi)</span>
<svg style="left:159.5px;top:564.6px" width="4" height="7" viewBox="0 0 4 7"><path d="M.5 .5 L3.3 3.5 L.5 6.5" fill="none" stroke="#c8c8c8" stroke-width=".8"/></svg>
<!--RULERS_END-->
<!-- toolbox -->
<div class="abs" style="left:188px;top:171px;width:48px;height:272.6px;background:#535353;border-radius:2px"></div>
<div class="abs" style="left:188px;top:171px;width:48px;height:9.5px;background:#424242;border-radius:2px 2px 0 0"></div>
<svg style="left:191.2px;top:174.5px" width="4.4" height="4.4" viewBox="0 0 4.4 4.4"><path d="M.3 .3 L4.1 4.1 M4.1 .3 L.3 4.1" stroke="#e0e0e0" stroke-width=".9"/></svg>
<svg style="left:226.4px;top:174.8px" width="5" height="3.6" viewBox="0 0 5 3.6"><path d="M2 .2 L.5 1.8 L2 3.4 M4.5 .2 L3 1.8 L4.5 3.4" fill="none" stroke="#d8d8d8" stroke-width=".7"/></svg>
<div class="abs" style="left:204px;top:184px;width:15px;height:1px;background:#484848"></div>
<div class="abs" style="left:190.3px;top:369.7px;width:20.5px;height:15.5px;background:#383838"></div>
<svg style="left:194.8px;top:195.0px" width="12" height="12" viewBox="0 0 12 12"><path d="M6 1.8 V10.2 M1.8 6 H10.2" stroke="#e6e6e6" stroke-width="1.2"/><path d="M6 .7 L7.9 3 H4.1 Z M6 11.3 L7.9 9 H4.1 Z M.7 6 L3 4.1 V7.9 Z M11.3 6 L9 4.1 V7.9 Z" fill="#e6e6e6"/></svg>
<svg style="left:207.8px;top:204.7px" width="2" height="2" viewBox="0 0 2 2"><path d="M2 0 V2 H0 Z" fill="#cfcfcf"/></svg>
<svg style="left:217.3px;top:195.0px" width="12" height="12" viewBox="0 0 12 12"><rect x="1" y="1.8" width="10.2" height="8.2" fill="none" stroke="#e6e6e6" stroke-width="1.1" stroke-dasharray="2.1 1.15"/></svg>
<svg style="left:230.3px;top:204.7px" width="2" height="2" viewBox="0 0 2 2"><path d="M2 0 V2 H0 Z" fill="#cfcfcf"/></svg>
<svg style="left:194.8px;top:212.5px" width="12" height="12" viewBox="0 0 12 12"><path d="M.8 2 L7.4 5.2 L3.2 10.6 L5.6 6.2 Z" fill="none" stroke="#e6e6e6" stroke-width="1"/><circle cx="8.4" cy="3.2" r="2" fill="none" stroke="#e6e6e6" stroke-width="1.2"/><path d="M5 7.6 L9.6 6.4" stroke="#e6e6e6" stroke-width="1"/></svg>
<svg style="left:207.8px;top:222.2px" width="2" height="2" viewBox="0 0 2 2"><path d="M2 0 V2 H0 Z" fill="#cfcfcf"/></svg>
<svg style="left:217.3px;top:212.5px" width="12" height="12" viewBox="0 0 12 12"><path d="M5.4 2 A3.6 3.6 0 1 0 6.4 9" fill="none" stroke="#e6e6e6" stroke-width=".9" stroke-dasharray="1.4 .9"/><path d="M11 .8 L7.6 6.2" stroke="#e6e6e6" stroke-width="1.7" stroke-linecap="round"/><path d="M7.6 6 L5.6 9.4 L8.6 7.4 Z" fill="#e6e6e6"/></svg>
<svg style="left:230.3px;top:222.2px" width="2" height="2" viewBox="0 0 2 2"><path d="M2 0 V2 H0 Z" fill="#cfcfcf"/></svg>
<svg style="left:194.8px;top:230.0px" width="12" height="12" viewBox="0 0 12 12"><path d="M1.6 .8 L10.2 2 L10.2 9.6 L1.6 11.2 Z" fill="none" stroke="#e6e6e6" stroke-width="1.1"/><path d="M4.4 1.4 V10.6 M7.3 1.8 V10.1 M1.6 4.4 H10.2 M1.6 7.6 H10.2" stroke="#8f8f8f" stroke-width=".45"/><circle cx="1.6" cy=".9" r="1" fill="#e6e6e6"/><circle cx="10.2" cy="2" r=".9" fill="#e6e6e6"/><circle cx="10.2" cy="9.6" r=".9" fill="#e6e6e6"/><circle cx="1.6" cy="11.1" r=".9" fill="#e6e6e6"/></svg>
<svg style="left:207.8px;top:239.7px" width="2" height="2" viewBox="0 0 2 2"><path d="M2 0 V2 H0 Z" fill="#cfcfcf"/></svg>
<svg style="left:217.3px;top:230.0px" width="12" height="12" viewBox="0 0 12 12"><rect x=".8" y="1.4" width="10.4" height="9.2" fill="none" stroke="#e6e6e6" stroke-width="1.2"/><path d="M.8 1.4 L11.2 10.6 M11.2 1.4 L.8 10.6" stroke="#e6e6e6" stroke-width="1"/></svg>
<svg style="left:194.8px;top:248.0px" width="12" height="12" viewBox="0 0 12 12"><path d="M1 11 L1.6 8.8 L6.6 3.8 L8.2 5.4 L3.2 10.4 Z" fill="none" stroke="#e6e6e6" stroke-width="1"/><path d="M5.6 2.6 L9.4 6.4" stroke="#e6e6e6" stroke-width="1.5" stroke-linecap="round"/><path d="M7.4 4.4 L9.2 2.6" stroke="#e6e6e6" stroke-width="2.6" stroke-linecap="round"/></svg>
<svg style="left:207.8px;top:257.7px" width="2" height="2" viewBox="0 0 2 2"><path d="M2 0 V2 H0 Z" fill="#cfcfcf"/></svg>
<svg style="left:217.3px;top:248.0px" width="12" height="12" viewBox="0 0 12 12"><rect x="2" y="2.4" width="8" height="7.2" rx="1.2" fill="#626262" stroke="#e6e6e6" stroke-width="1"/><path d="M3.4 .8 V2.2 M6 .8 V2.2 M8.6 .8 V2.2 M3.4 9.8 V11.2 M6 9.8 V11.2 M8.6 9.8 V11.2 M.4 4.2 H1.8 M.4 6 H1.8 M.4 7.8 H1.8 M10.2 4.2 H11.6 M10.2 6 H11.6 M10.2 7.8 H11.6" stroke="#e6e6e6" stroke-width=".8"/></svg>
<svg style="left:230.3px;top:257.7px" width="2" height="2" viewBox="0 0 2 2"><path d="M2 0 V2 H0 Z" fill="#cfcfcf"/></svg>
<svg style="left:194.8px;top:265.5px" width="12" height="12" viewBox="0 0 12 12"><path d="M10.9 .5 L11.5 1.1 L7 7.4 L5.2 6 Z" fill="#e6e6e6"/><path d="M4.8 6.2 C2.8 6.4 3 8.8 .9 11 C3.8 11.4 6.6 10.4 6.9 7.8 Z" fill="#e6e6e6"/></svg>
<svg style="left:207.8px;top:275.2px" width="2" height="2" viewBox="0 0 2 2"><path d="M2 0 V2 H0 Z" fill="#cfcfcf"/></svg>
<svg style="left:217.3px;top:265.5px" width="12" height="12" viewBox="0 0 12 12"><circle cx="6" cy="2.6" r="2" fill="#e6e6e6"/><path d="M5 4 H7 L7.4 6.6 H10.6 V8.8 H1.4 V6.6 H4.6 Z" fill="#e6e6e6"/><path d="M1.6 10.4 H10.4" stroke="#e6e6e6" stroke-width="1.1"/></svg>
<svg style="left:230.3px;top:275.2px" width="2" height="2" viewBox="0 0 2 2"><path d="M2 0 V2 H0 Z" fill="#cfcfcf"/></svg>
<svg style="left:194.8px;top:283.0px" width="12" height="12" viewBox="0 0 12 12"><path d="M10.9 .7 L11.5 1.3 L7 7.6 L5.2 6.2 Z" fill="#e6e6e6"/><path d="M4.8 6.4 C3 6.6 3.2 8.8 1.2 11 C3.8 11.3 6.4 10.4 6.8 8 Z" fill="#e6e6e6"/><path d="M3.4 5.2 C.6 4.4 1.4 .8 4 1.2 C6 1.6 5.4 4 3.8 3.4 M8.4 5.8 C10.6 7.6 9.4 10.4 6.8 10.8" fill="none" stroke="#e6e6e6" stroke-width=".8"/></svg>
<svg style="left:207.8px;top:292.7px" width="2" height="2" viewBox="0 0 2 2"><path d="M2 0 V2 H0 Z" fill="#cfcfcf"/></svg>
<svg style="left:217.3px;top:283.0px" width="12" height="12" viewBox="0 0 12 12"><path d="M7.4 2.2 L11 5.2 L6.4 10.6 L2.8 7.6 Z" fill="#e6e6e6"/><path d="M4.8 5.2 L8.4 8.2" stroke="#535353" stroke-width=".9"/><path d="M2 1 V3.4 M.8 2.2 H3.2 M4.6 .4 V1.8 M3.9 1.1 H5.3 M1.2 4.8 V6 M.6 5.4 H1.8" stroke="#e6e6e6" stroke-width=".7"/></svg>
<svg style="left:230.3px;top:292.7px" width="2" height="2" viewBox="0 0 2 2"><path d="M2 0 V2 H0 Z" fill="#cfcfcf"/></svg>
<svg style="left:194.8px;top:301.0px" width="12" height="12" viewBox="0 0 12 12"><defs><linearGradient id="gr" x1="0" x2="1"><stop offset="0" stop-color="#e8e8e8"/><stop offset="1" stop-color="#4a4a4a"/></linearGradient></defs><rect x="1.1" y="2" width="9.8" height="8" fill="url(#gr)" stroke="#e6e6e6" stroke-width="1"/></svg>
<svg style="left:207.8px;top:310.7px" width="2" height="2" viewBox="0 0 2 2"><path d="M2 0 V2 H0 Z" fill="#cfcfcf"/></svg>
<svg style="left:217.3px;top:301.0px" width="12" height="12" viewBox="0 0 12 12"><path d="M4.6 6.2 C2.4 4.4 3.6 1 6.6 1 C9.8 1 11 3 10.4 5 C10 6.4 8.4 6.8 7.2 6.2 Z" fill="#e6e6e6"/><path d="M6.4 5.4 L2 10.8" stroke="#e6e6e6" stroke-width="1.8" stroke-linecap="round"/><path d="M7 2.2 L8.8 5" stroke="#535353" stroke-width=".7"/></svg>
<svg style="left:230.3px;top:310.7px" width="2" height="2" viewBox="0 0 2 2"><path d="M2 0 V2 H0 Z" fill="#cfcfcf"/></svg>
<svg style="left:194.8px;top:318.5px" width="12" height="12" viewBox="0 0 12 12"><path d="M1 6 C.6 3.2 3 1.6 5.4 2 C8.4 2.2 11 4 11.4 6.6 C11.6 8.8 9.6 9.8 7.6 9.6 C5.6 10.4 1.6 9.6 1 6 Z" fill="#e6e6e6"/><ellipse cx="5" cy="5.6" rx="1.8" ry="1.3" fill="#535353"/><path d="M7.4 8.4 L10.8 8.6" stroke="#535353" stroke-width=".8"/></svg>
<svg style="left:207.8px;top:328.2px" width="2" height="2" viewBox="0 0 2 2"><path d="M2 0 V2 H0 Z" fill="#cfcfcf"/></svg>
<svg style="left:217.3px;top:318.5px" width="12" height="12" viewBox="0 0 12 12"><path d="M8 .8 L11 3.6 L9.6 5.2 C9.4 8.2 6.6 10 2.2 10.8 C2 7 3.6 3.6 6.6 2.4 Z" fill="none" stroke="#e6e6e6" stroke-width="1"/><path d="M2.4 10.6 L6 6.6" stroke="#e6e6e6" stroke-width=".8"/><circle cx="6.3" cy="6.3" r="1" fill="#e6e6e6"/></svg>
<svg style="left:230.3px;top:328.2px" width="2" height="2" viewBox="0 0 2 2"><path d="M2 0 V2 H0 Z" fill="#cfcfcf"/></svg>
<svg style="left:194.8px;top:336.0px" width="12" height="12" viewBox="0 0 12 12"><path d="M1 1 H11 V3.6 H10 C9.8 2.4 9.4 2.2 7 2.2 V9.6 C7 10.2 7.4 10.3 8.6 10.4 V11.2 H3.4 V10.4 C4.6 10.3 5 10.2 5 9.6 V2.2 C2.6 2.2 2.2 2.4 2 3.6 H1 Z" fill="#e6e6e6"/></svg>
<svg style="left:207.8px;top:345.7px" width="2" height="2" viewBox="0 0 2 2"><path d="M2 0 V2 H0 Z" fill="#cfcfcf"/></svg>
<svg style="left:217.3px;top:336.0px" width="12" height="12" viewBox="0 0 12 12"><path d="M2.8 .6 L2.8 9.6 L5 7.6 L6.6 11.2 L8 10.6 L6.4 7 L9.4 6.8 Z" fill="#e6e6e6"/></svg>
<svg style="left:230.3px;top:345.7px" width="2" height="2" viewBox="0 0 2 2"><path d="M2 0 V2 H0 Z" fill="#cfcfcf"/></svg>
<svg style="left:194.8px;top:354.0px" width="12" height="12" viewBox="0 0 12 12"><path d="M6 1 L11.2 10.4 H.8 Z" fill="#6e6e6e" stroke="#e6e6e6" stroke-width="1"/></svg>
<svg style="left:207.8px;top:363.7px" width="2" height="2" viewBox="0 0 2 2"><path d="M2 0 V2 H0 Z" fill="#cfcfcf"/></svg>
<svg style="left:217.3px;top:354.0px" width="12" height="12" viewBox="0 0 12 12"><path d="M3 8 L2.6 5.2 L4 4.6 L4.4 3 L6 3.2 L7.6 3.4 L8.6 4.6 L9.4 8 L8 10.8 H4.6 Z" fill="#e6e6e6"/><path d="M4.4 4.6 V7 M6 4.2 V7 M7.6 4.6 V7" stroke="#535353" stroke-width=".6"/><path d="M1.2 5 A5 5 0 0 1 8.6 1.2 M10.9 6.4 A5 5 0 0 1 9.4 10" fill="none" stroke="#e6e6e6" stroke-width=".9"/><path d="M8 .2 L10.4 1.8 L7.6 2.6 Z" fill="#e6e6e6"/></svg>
<svg style="left:230.3px;top:363.7px" width="2" height="2" viewBox="0 0 2 2"><path d="M2 0 V2 H0 Z" fill="#cfcfcf"/></svg>
<svg style="left:194.8px;top:372.0px" width="12" height="12" viewBox="0 0 12 12"><circle cx="4.6" cy="4.6" r="3.7" fill="none" stroke="#e6e6e6" stroke-width="1.1"/><path d="M7.4 7.4 L11 11" stroke="#e6e6e6" stroke-width="1.7" stroke-linecap="round"/><path d="M2.6 3.8 A2.3 2.3 0 0 1 4.8 2.4" fill="none" stroke="#bdbdbd" stroke-width=".6"/></svg>
<svg style="left:217.3px;top:372.0px" width="12" height="12" viewBox="0 0 12 12"><circle cx="1.7" cy="6" r="1.05" fill="#e6e6e6"/><circle cx="6" cy="6" r="1.05" fill="#e6e6e6"/><circle cx="10.3" cy="6" r="1.05" fill="#e6e6e6"/></svg>
<svg style="left:230.3px;top:381.7px" width="2" height="2" viewBox="0 0 2 2"><path d="M2 0 V2 H0 Z" fill="#cfcfcf"/></svg>
<div class="abs" style="left:210px;top:403px;width:16px;height:16px;background:#402d34;border:1px solid #d6d6d6"></div>
<div class="abs" style="left:199.5px;top:392px;width:16.5px;height:16.5px;background:#e8eaee;border:.5px solid #f6f6f6"></div>
<svg style="left:221px;top:392px" width="7" height="7" viewBox="0 0 7 7"><path d="M1.6 1.6 H4.6 V5" fill="none" stroke="#e0e0e0" stroke-width=".9"/><path d="M0 1.6 L1.8 .2 V3 Z M4.6 6.8 L3.2 4.8 H6 Z" fill="#e0e0e0"/></svg>
<div class="abs" style="left:201.4px;top:416.6px;width:4.2px;height:4.2px;background:#e6e6e6"></div>
<div class="abs" style="left:199px;top:414.2px;width:4.4px;height:4.4px;background:#0c0c0c;border:.6px solid #e6e6e6"></div>
<svg style="left:194.4px;top:429px" width="12.4" height="8.4" viewBox="0 0 12.4 8.4"><rect x=".5" y=".5" width="11.4" height="7.4" fill="none" stroke="#e0e0e0" stroke-width="1"/><circle cx="6.2" cy="4.2" r="2.3" fill="none" stroke="#e0e0e0" stroke-width=".8" stroke-dasharray="1 .6"/></svg>
<svg style="left:217.3px;top:428.4px" width="12.4" height="9.2" viewBox="0 0 12.4 9.2"><rect x="3.6" y=".5" width="8.2" height="5.6" fill="#535353" stroke="#e0e0e0" stroke-width="1"/><rect x=".5" y="3" width="8.2" height="5.6" fill="#535353" stroke="#e0e0e0" stroke-width="1"/></svg>
<svg style="left:230.2px;top:436.6px" width="2" height="2" viewBox="0 0 2 2"><path d="M2 0 V2 H0 Z" fill="#cfcfcf"/></svg>
<!--TOOLBOX_END-->
<!-- layers panel -->
<div class="abs" style="left:798px;top:129.5px;width:162px;height:416.5px;background:#535353;border-radius:2px;box-shadow:0 0 0 .5px #3a3a3a"></div>
<div class="abs" style="left:798px;top:129.5px;width:162px;height:27.5px;background:#424242;border-radius:2px 2px 0 0"></div>
<div class="abs" style="left:798px;top:139px;width:36px;height:18px;background:#535353;border-radius:1.5px 1.5px 0 0"></div>
<svg style="left:801.6px;top:133px" width="4.2" height="4.2" viewBox="0 0 4.2 4.2"><path d="M.3 .3 L3.9 3.9 M3.9 .3 L.3 3.9" stroke="#d4d4d4" stroke-width=".8"/></svg>
<svg style="left:949.8px;top:132.8px" width="5" height="3.6" viewBox="0 0 5 3.6"><path d="M2 .2 L.5 1.8 L2 3.4 M4.5 .2 L3 1.8 L4.5 3.4" fill="none" stroke="#d8d8d8" stroke-width=".7"/></svg>
<span class="t" style="left:804.6px;top:145.1px;font-size:7.6px;font-weight:bold;color:#f2f2f2;letter-spacing:-.05px">Layers</span>
<svg style="left:949.4px;top:145.6px" width="7" height="5.6" viewBox="0 0 7 5.6"><path d="M0 .6 H7 M0 2.2 H7 M0 3.8 H7 M0 5.2 H7" stroke="#9c9c9c" stroke-width=".9"/></svg>
<div class="abs" style="left:798px;top:157px;width:162px;height:1px;background:#464646"></div>
<div class="abs" style="left:798px;top:179.8px;width:162px;height:1px;background:#464646"></div>
<div class="abs" style="left:798px;top:198.2px;width:162px;height:1px;background:#464646"></div>
<div class="abs" style="left:798px;top:523.6px;width:162px;height:1px;background:#464646"></div>
<div class="abs" style="left:798px;top:540.3px;width:162px;height:1px;background:#464646"></div>
<div class="abs" style="left:803px;top:165px;width:57px;height:11px;background:#4d4d4d;border-radius:1.5px"></div>
<svg style="left:806.7px;top:167px" width="7" height="7" viewBox="0 0 7 7"><circle cx="2.7" cy="2.7" r="2.1" fill="none" stroke="#a8a8a8" stroke-width=".9"/><path d="M4.3 4.3 L6.5 6.5" stroke="#a8a8a8" stroke-width="1"/></svg>
<span class="t" style="left:815.6px;top:167.2px;font-size:7.4px;color:#8e8e8e">Kind</span>
<svg style="left:853px;top:169.4px" width="4.4" height="2.8" viewBox="0 0 4.4 2.8"><path d="M.3 .3 L2.2 2.3 L4.1 .3" fill="none" stroke="#5f5f5f" stroke-width=".8"/></svg>
<svg style="left:868.7px;top:166.8px" width="8.6" height="7.4" viewBox="0 0 8.6 7.4"><rect x=".5" y=".5" width="7.6" height="6.4" rx=".6" fill="none" stroke="#dedede" stroke-width=".9"/><path d="M1.8 5.6 L3.4 3.4 L4.6 4.8 L5.6 4 L6.8 5.6 Z" fill="#dedede"/></svg>
<svg style="left:885px;top:166.6px" width="8" height="8" viewBox="0 0 8 8"><circle cx="4" cy="4" r="3.4" fill="none" stroke="#dedede" stroke-width=".9"/><path d="M1.6 6.4 A3.4 3.4 0 0 0 6.4 1.6 Z" fill="#dedede"/></svg>
<svg style="left:901.6px;top:166.6px" width="7.6" height="8" viewBox="0 0 7.6 8"><path d="M.2 .4 H7.4 V2.4 H6.7 C6.6 1.5 6.3 1.3 4.6 1.3 V6.6 C4.6 7.1 4.9 7.2 5.7 7.2 V7.8 H1.9 V7.2 C2.7 7.2 3 7.1 3 6.6 V1.3 C1.3 1.3 1 1.5 .9 2.4 H.2 Z" fill="#dedede"/></svg>
<svg style="left:917.5px;top:166.2px" width="8.6" height="8.6" viewBox="0 0 8.6 8.6"><rect x="1.3" y="1.3" width="6" height="6" fill="none" stroke="#dedede" stroke-width=".9"/><rect x="0" y="0" width="2.2" height="2.2" fill="#dedede"/><rect x="6.4" y="0" width="2.2" height="2.2" fill="#dedede"/><rect x="0" y="6.4" width="2.2" height="2.2" fill="#dedede"/><rect x="6.4" y="6.4" width="2.2" height="2.2" fill="#dedede"/></svg>
<svg style="left:935px;top:166.2px" width="8" height="8.6" viewBox="0 0 8 8.6"><path d="M2.2 .5 H5.4 L7.5 2.6 V8.1 H2.2 Z" fill="none" stroke="#dedede" stroke-width=".9"/><path d="M5.2 .6 V2.8 H7.4" fill="none" stroke="#dedede" stroke-width=".7"/><rect x=".2" y="4.4" width="4" height="3.8" fill="#dedede"/></svg>
<div class="abs" style="left:950.8px;top:164.6px;width:6px;height:6px;border-radius:50%;background:#a6a6a6"></div>
<div class="abs" style="left:803px;top:184.2px;width:86px;height:10.8px;background:#4e4e4e;border:.6px solid #5c5c5c;border-radius:1.5px"></div>
<span class="t" style="left:806.2px;top:186.2px;font-size:7.4px;color:#848484">Normal</span>
<div class="abs" style="left:831.5px;top:187px;width:.6px;height:5.4px;background:#6c6c6c"></div>
<span class="t" style="left:892px;top:186.2px;font-size:7.4px;color:#949494;letter-spacing:-.1px">Opacity:</span>
<div class="abs" style="left:922.2px;top:184.2px;width:23px;height:10.8px;background:#4b4b4b;border-radius:1.5px"></div>
<span class="t" style="left:925.5px;top:186.4px;font-size:7px;color:#666">100%</span>
<div class="abs" style="left:946.6px;top:184.2px;width:9.4px;height:10.8px;background:#4e4e4e;border-radius:1.5px"></div>
<svg style="left:949.2px;top:188.6px" width="4.4" height="2.8" viewBox="0 0 4.4 2.8"><path d="M.3 .3 L2.2 2.3 L4.1 .3" fill="none" stroke="#686868" stroke-width=".8"/></svg>
<span class="t" style="left:802px;top:205.4px;font-size:7.4px;color:#949494">Lock:</span>
<svg style="left:823.7px;top:204.6px" width="8.4" height="8.4" viewBox="0 0 8.4 8.4"><rect x=".4" y=".4" width="7.6" height="7.6" fill="none" stroke="#dedede" stroke-width=".8"/><path d="M.4 .4 H3 V3 H.4 Z M5.4 .4 H8 V3 H5.4 Z M3 3 H5.4 V5.4 H3 Z M.4 5.4 H3 V8 H.4 Z M5.4 5.4 H8 V8 H5.4 Z" fill="#dedede"/></svg>
<svg style="left:839px;top:204.2px" width="8.6" height="9.4" viewBox="0 0 8.6 9.4"><path d="M8 .3 L8.5 .8 L5.2 5.9 L3.8 4.8 Z" fill="#dedede"/><path d="M3.5 5 C2 5.2 2.2 7 .6 8.8 C2.8 9.1 4.9 8.3 5.2 6.3 Z" fill="#dedede"/></svg>
<svg style="left:853px;top:204.4px" width="9" height="9" viewBox="0 0 9 9"><path d="M4.5 1 V8 M1 4.5 H8" stroke="#dedede" stroke-width=".9"/><path d="M4.5 0 L6 1.8 H3 Z M4.5 9 L6 7.2 H3 Z M0 4.5 L1.8 3 V6 Z M9 4.5 L7.2 3 V6 Z" fill="#dedede"/></svg>
<svg style="left:867.9px;top:204.6px" width="9.4" height="8.4" viewBox="0 0 9.4 8.4"><path d="M1.8 0 V6.8 H9 M0 1.8 H6.6 V8.4" fill="none" stroke="#dedede" stroke-width=".9"/><path d="M5.4 3 L8.6 .4" stroke="#dedede" stroke-width=".7"/></svg>
<svg style="left:883.7px;top:204.6px" width="7.2" height="8.6" viewBox="0 0 7.8 9.4"><path d="M2 4.2 V2.8 A1.9 1.9 0 0 1 5.800000000000001 2.8 V4.2" fill="none" stroke="#dedede" stroke-width="1"/><rect x=".4" y="4" width="7" height="5.2" rx=".6" fill="#dedede"/></svg>
<span class="t" style="left:908.4px;top:205.4px;font-size:7.4px;color:#949494">Fill:</span>
<div class="abs" style="left:922.2px;top:203.4px;width:23px;height:10.8px;background:#4b4b4b;border-radius:1.5px"></div>
<span class="t" style="left:925.5px;top:205.6px;font-size:7px;color:#666">100%</span>
<div class="abs" style="left:946.6px;top:203.4px;width:9.4px;height:10.8px;background:#4e4e4e;border-radius:1.5px"></div>
<svg style="left:949.2px;top:207.8px" width="4.4" height="2.8" viewBox="0 0 4.4 2.8"><path d="M.3 .3 L2.2 2.3 L4.1 .3" fill="none" stroke="#686868" stroke-width=".8"/></svg>
<div class="abs" style="left:798px;top:219.4px;width:151px;height:28.4px;background:#505050"></div>
<div class="abs" style="left:819.5px;top:220px;width:129.3px;height:27px;background:#6a6a6a"></div>
<svg style="left:804.4px;top:230.6px" width="9.4" height="6.2" viewBox="0 0 9.4 6.2"><path d="M.2 3.1 C2 .2 7.4 .2 9.2 3.1 C7.4 6 2 6 .2 3.1 Z" fill="#f4f4f4"/><circle cx="4.7" cy="3.1" r="1.7" fill="#4d4d4d"/><circle cx="4.7" cy="3.1" r=".8" fill="#f4f4f4"/></svg>
<div class="abs" style="left:821.4px;top:222px;width:22.6px;height:22.6px;background:#fff;border:.8px solid #2e2e2e;border-radius:1.5px;box-shadow:0 0 0 .6px #8c8c8c"></div>
<span class="t" style="left:848.8px;top:230.2px;font-size:7.45px;color:#f4f4f4;-webkit-text-stroke:.15px #f4f4f4">Background</span>
<svg style="left:929.6px;top:229px" width="8" height="8.8" viewBox="0 0 8 8.8"><path d="M2.2 4 V2.7 A1.8 1.8 0 0 1 5.8 2.7 V4" fill="none" stroke="#ececec" stroke-width=".9"/><rect x=".9" y="3.9" width="6.2" height="4.4" rx=".5" fill="none" stroke="#ececec" stroke-width=".9"/><rect x="3.3" y="5.4" width="1.4" height="1.5" fill="#ececec"/></svg>
<svg style="left:821px;top:529.4px" width="10" height="5.4" viewBox="0 0 10 5.4"><rect x=".5" y=".6" width="5" height="4.2" rx="2.1" fill="none" stroke="#8a8a8a" stroke-width=".9"/><rect x="4.5" y=".6" width="5" height="4.2" rx="2.1" fill="none" stroke="#8a8a8a" stroke-width=".9"/><path d="M3 2.7 H7" stroke="#8a8a8a" stroke-width=".9"/></svg>
<span class="t" style="left:840.6px;top:527.4px;font-size:8.6px;font-style:italic;color:#8a8a8a;margin-top:1px">fx</span>
<svg style="left:858.2px;top:528.6px" width="9" height="7" viewBox="0 0 9 7"><rect x="0" y="0" width="9" height="7" rx=".6" fill="#dedede"/><circle cx="4.5" cy="3.5" r="2" fill="#535353"/></svg>
<svg style="left:877px;top:528.2px" width="10" height="9.6" viewBox="0 0 10 9.6"><circle cx="3.9" cy="3.9" r="3.3" fill="none" stroke="#dedede" stroke-width=".9"/><path d="M1.6 6.2 A3.3 3.3 0 0 0 6.2 1.6 Z" fill="#dedede"/><path d="M7 8 H9.4 L8.2 9.4 Z" fill="#dedede"/></svg>
<svg style="left:895px;top:528.4px" width="9" height="7.4" viewBox="0 0 9 7.4"><path d="M0 .4 H3.4 L4.4 1.6 H9 V7.2 H0 Z" fill="#dedede"/><path d="M0 2.6 H9" stroke="#535353" stroke-width=".5"/></svg>
<svg style="left:913.8px;top:528px" width="8.4" height="8.4" viewBox="0 0 8.4 8.4"><rect x=".5" y=".5" width="7.4" height="7.4" rx=".6" fill="none" stroke="#dedede" stroke-width="1"/><path d="M4.2 2.4 V6 M2.4 4.2 H6" stroke="#dedede" stroke-width="1"/></svg>
<svg style="left:932.8px;top:527.6px" width="7.4" height="9" viewBox="0 0 7.4 9"><path d="M0 1.6 H7.4 M2.6 1.4 V.4 H4.8 V1.4" fill="none" stroke="#8a8a8a" stroke-width=".9"/><path d="M.9 2.6 H6.5 V8.6 H.9 Z" fill="none" stroke="#8a8a8a" stroke-width=".9"/><path d="M2.6 3.8 V7.4 M4.8 3.8 V7.4" stroke="#8a8a8a" stroke-width=".7"/></svg>
<div class="abs" style="left:873px;top:542.6px;width:10px;height:1px;background:#474747"></div>
<div class="abs" style="left:955px;top:64.5px;width:25px;height:46px;background:#535353;border-radius:2px 0 0 0"></div>
<div class="abs" style="left:955px;top:110px;width:25px;height:1px;background:#434343"></div>
<svg style="left:962px;top:74px" width="10" height="10.6" viewBox="0 0 10 10.6"><rect x=".5" y=".5" width="9" height="9.6" rx=".6" fill="none" stroke="#e4e4e4" stroke-width="1"/><rect x="1.8" y="1.8" width="3" height="3.2" fill="#e4e4e4"/><rect x="5.6" y="1.8" width="2.6" height="3.2" fill="#e4e4e4"/><rect x="1.8" y="6.6" width="6.4" height="1.6" fill="#e4e4e4"/></svg>
<svg style="left:962px;top:93.4px" width="10" height="10.6" viewBox="0 0 10 10.6"><path d="M.4 .4 H9.6 V7.4 L6.6 10.2 H.4 Z" fill="#e4e4e4"/><path d="M2 2.4 H8 M2 4.2 H8 M2 6 H5.4" stroke="#8a8a8a" stroke-width=".7"/><path d="M6.6 10.2 V7.4 H9.6" fill="none" stroke="#535353" stroke-width=".7"/></svg>
<svg style="left:970.6px;top:58px" width="5" height="3.6" viewBox="0 0 5 3.6"><path d="M2 .2 L.5 1.8 L2 3.4 M4.5 .2 L3 1.8 L4.5 3.4" fill="none" stroke="#d8d8d8" stroke-width=".7"/></svg>
<!--LAYERS_END-->

</body>
</html>
